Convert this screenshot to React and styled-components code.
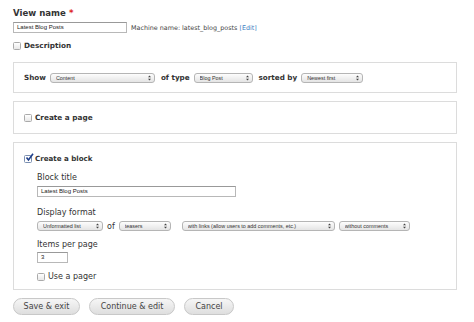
import styled, { createGlobalStyle } from 'styled-components';

const GlobalStyle = createGlobalStyle`
  html, body {
    margin: 0;
    padding: 0;
    background: #ffffff;
  }
  body {
    font-family: "DejaVu Sans", "Liberation Sans", sans-serif;
    color: #333;
  }
`;

const Page = styled.div`
  width: 474px;
  height: 322px;
  padding: 8px 17px 0 13px;
  box-sizing: border-box;
  display: flex;
  flex-direction: column;
`;

const FieldLabel = styled.div`
  font-size: ${(p) => p.size || 8}px;
  font-weight: ${(p) => (p.bold ? 700 : 400)};
  line-height: 10px;
  color: #333;
  margin-bottom: ${(p) => p.gap || 3}px;
`;

const Required = styled.span`
  color: #d22;
`;

const InputRow = styled.div`
  display: flex;
  align-items: center;
  gap: 4px;
`;

const TextInput = styled.div`
  width: ${(p) => p.width}px;
  height: 11px;
  box-sizing: border-box;
  border: 1px solid #b8b8b8;
  border-top-color: #999;
  background: #fff;
  font-family: "Liberation Sans", sans-serif;
  font-size: 6px;
  line-height: 9px;
  padding-left: 3px;
  color: #222;
`;

const Note = styled.span`
  font-size: 6.4px;
  color: #444;
`;

const EditLink = styled.span`
  color: #3a7cc1;
`;

const CheckRow = styled.label`
  display: flex;
  align-items: center;
  gap: 3px;
  font-size: ${(p) => p.size || 8}px;
  font-weight: ${(p) => (p.bold ? 700 : 400)};
  color: #333;
  line-height: 10px;
`;

const Box = styled.span`
  width: 6px;
  height: 6px;
  border: 1px solid #aaa;
  border-radius: 1.5px;
  background: linear-gradient(#fff, #e8e8e8);
  display: inline-flex;
  align-items: center;
  justify-content: center;
  position: relative;
`;

const Panel = styled.div`
  border: 1px solid #dcdcdc;
  box-sizing: border-box;
  height: ${(p) => p.height}px;
  margin-top: ${(p) => p.top}px;
  padding: ${(p) => p.pad || '0 10px'};
  display: flex;
  flex-direction: column;
  justify-content: ${(p) => (p.center ? 'center' : 'flex-start')};
`;

const SelectRow = styled.div`
  display: flex;
  align-items: center;
  gap: ${(p) => p.gap || 5}px;
`;

const InlineLabel = styled.span`
  font-size: ${(p) => p.size || 7.2}px;
  font-weight: ${(p) => (p.bold ? 700 : 400)};
  color: #333;
  margin-left: ${(p) => p.lead || 0}px;
`;

const Select = styled.div`
  width: ${(p) => p.width}px;
  height: 10px;
  box-sizing: border-box;
  border: 1px solid #b5b5b5;
  border-radius: 3px;
  background: linear-gradient(#fdfdfd, #e4e4e4);
  display: flex;
  align-items: center;
  font-family: "Liberation Sans", sans-serif;
  font-size: 5.4px;
  color: #333;
  padding-left: 5px;
`;

const SelectText = styled.span`
  flex: 1;
  white-space: nowrap;
  overflow: hidden;
`;

const Arrows = styled.span`
  width: 9px;
  height: 100%;
  display: flex;
  align-items: center;
  justify-content: center;
`;

const Inner = styled.div`
  padding-left: 13px;
  display: flex;
  flex-direction: column;
`;

const Spacer = styled.div`
  height: ${(p) => p.h || 0}px;
  width: ${(p) => p.w || 0}px;
  flex: none;
`;

const Buttons = styled.div`
  display: flex;
  gap: 9px;
  margin-top: 8px;
`;

const Button = styled.button`
  height: 17px;
  width: ${(p) => p.width}px;
  border: 1px solid #c8c8c8;
  border-radius: 9px;
  background: linear-gradient(#f6f6f6, #dedede);
  font-family: "DejaVu Sans", sans-serif;
  font-size: 8px;
  color: #444;
  padding: 0;
`;

function Check({ checked }) {
  return (
    <Box style={checked ? { background: '#fff', borderColor: '#7a8fb0' } : undefined}>
      {checked && (
        <svg width="9" height="9" viewBox="0 0 9 9" style={{ position: 'absolute', left: 0, top: -3 }}>
          <path d="M1.5 4.5 L3.5 7 L8 0.8" stroke="#1f3f8a" strokeWidth="1.6" fill="none" />
        </svg>
      )}
    </Box>
  );
}

function Dropdown({ width, children }) {
  return (
    <Select width={width}>
      <SelectText>{children}</SelectText>
      <Arrows>
        <svg width="3" height="6" viewBox="0 0 3 6">
          <path d="M0 2.3 L1.5 0.5 L3 2.3 Z M0 3.7 L1.5 5.5 L3 3.7 Z" fill="#444" />
        </svg>
      </Arrows>
    </Select>
  );
}

export default function App() {
  return (
    <>
      <GlobalStyle />
      <Page>
        <FieldLabel bold size={8.6} gap={4}>
          View name <Required>*</Required>
        </FieldLabel>
        <InputRow>
          <TextInput width={114}>Latest Blog Posts</TextInput>
          <Note>
            Machine name: latest_blog_posts <EditLink>[Edit]</EditLink>
          </Note>
        </InputRow>
        <Spacer h={8} />
        <CheckRow bold size={7.3}>
          <Check /> Description
        </CheckRow>

        <Panel height={31} top={11} center>
          <SelectRow gap={4}>
            <InlineLabel bold>Show</InlineLabel>
            <Dropdown width={105}>Content</Dropdown>
            <InlineLabel bold lead={2}>of type</InlineLabel>
            <Dropdown width={59}>Blog Post</Dropdown>
            <InlineLabel bold lead={2}>sorted by</InlineLabel>
            <Dropdown width={62}>Newest first</Dropdown>
          </SelectRow>
        </Panel>

        <Panel height={33} top={8} center>
          <CheckRow bold size={7.3}>
            <Check /> Create a page
          </CheckRow>
        </Panel>

        <Panel height={148} top={8} pad="11px 10px 0 10px">
          <CheckRow bold size={7.1}>
            <Check checked /> Create a block
          </CheckRow>
          <Inner>
            <Spacer h={9} />
            <FieldLabel gap={3}>Block title</FieldLabel>
            <TextInput width={199}>Latest Blog Posts</TextInput>
            <Spacer h={11} />
            <FieldLabel gap={3}>Display format</FieldLabel>
            <SelectRow gap={4}>
              <Dropdown width={66}>Unformatted list</Dropdown>
              <InlineLabel size={8}>of</InlineLabel>
              <Dropdown width={52}>teasers</Dropdown>
              <Spacer w={3} />
              <Dropdown width={153}>with links (allow users to add comments, etc.)</Dropdown>
              <Dropdown width={71}>without comments</Dropdown>
            </SelectRow>
            <Spacer h={9} />
            <FieldLabel gap={2}>Items per page</FieldLabel>
            <TextInput width={31}>3</TextInput>
            <Spacer h={9} />
            <CheckRow size={8}>
              <Check /> Use a pager
            </CheckRow>
          </Inner>
        </Panel>

        <Buttons>
          <Button width={67}>Save &amp; exit</Button>
          <Button width={86}>Continue &amp; edit</Button>
          <Button width={50}>Cancel</Button>
        </Buttons>
      </Page>
    </>
  );
}
